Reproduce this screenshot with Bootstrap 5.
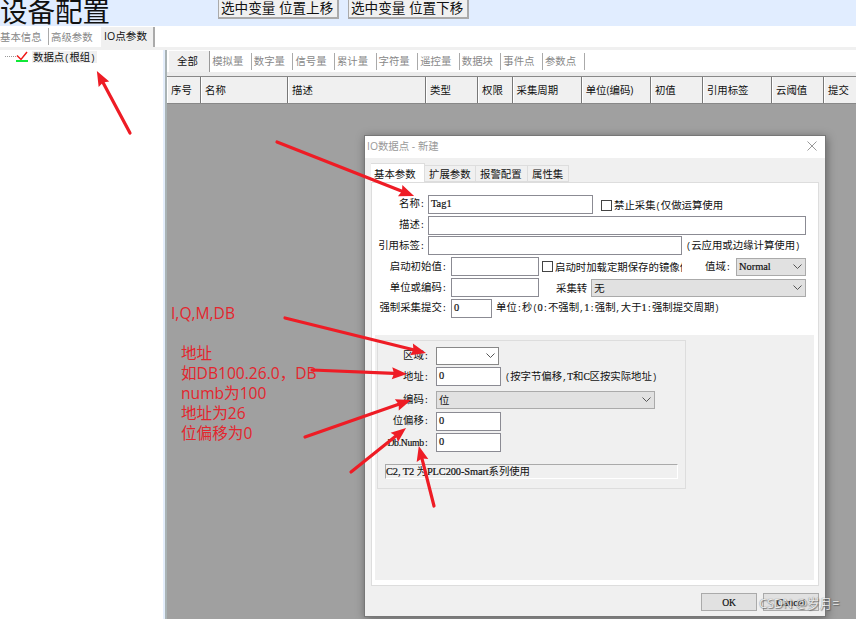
<!DOCTYPE html>
<html lang="zh-CN">
<head>
<meta charset="utf-8">
<title>设备配置</title>
<link href="https://cdn.jsdelivr.net/npm/bootstrap@5.3.0/dist/css/bootstrap.min.css" rel="stylesheet">
<style>
body{width:856px;height:619px;overflow:hidden;font:10.4px/14px "Open Sans","Noto Sans CJK SC",sans-serif;color:#111;background:#fff}
.shell{width:856px;height:619px}
.topbar{height:26px;background:#e1edff}
.topbar h1{font:27.5px/36px "Noto Sans CJK SC",sans-serif;margin:-8px 0 0;width:218px;color:#111}
.movebtn{width:121px;height:22px;margin-top:-3px;margin-right:9px;border:1px solid #aaa;border-bottom-width:2px;border-right-width:2px;background:#f0f0f0;font:13.6px/20px "Open Sans","Noto Sans CJK SC",sans-serif;padding:0 0 0 2px;white-space:nowrap;color:#111;text-align:left}
.maintabs{height:21px;color:#888}
.maintabs>div{height:17px;line-height:19px;white-space:nowrap}
.mt1{width:49px;border-right:1px solid #aaa}
.mt2{width:52px;padding-left:2px}
.mt3{width:54px;background:#f0f0f0;color:#111;border-right:2px solid #aaa;padding-left:3px;height:20px!important;font-size:10.6px}
.rule3{height:3px;background:#f0f0f0}
.tree{width:163px;flex:none;padding:1px 0 0 5px}
.tree .node{background:#f0f0f0;height:12px;line-height:12px;padding:0 2px 0 1px;margin-left:2px}
.split{width:4px;background:#e4eefc;border-right:2px solid #a9b3b5}
.subtabs{height:22px;color:#888;padding:1px 0 0 2px}
.subtabs>div{flex:none;width:41.6px;height:17px;line-height:17px;margin-top:2px;border-right:1px solid #aaa;padding-left:2px;white-space:nowrap}
.subtabs>div:first-child{width:41.2px;height:21px;margin-top:0;line-height:20px;background:#f0f0f0;color:#111;padding-left:8px;border-right:1.5px solid #999}
.gap5{height:4px;background:#ececec}
.gridhead{height:28px;background:#f0f0f0;border-top:1.5px solid #888;border-bottom:1px solid #888}
.gridhead>div{border-right:1px solid #777;border-left:1px solid #fff;padding-left:3px;line-height:27px;white-space:nowrap;flex:none}
.g1{width:34px}.g2{width:87px}.g3{width:138px}.g4{width:52px}.g5{width:34.5px}.g6{width:69.2px}.g8{width:52px}.g10{width:52px}
.canvas{background:#a0a0a0}
.dlg{position:absolute;left:364px;top:135px;width:462px;height:482px;background:#f0f0f0;border:1px solid #777;box-shadow:1px 2px 9px rgba(0,0,0,.38)}
.dlg-title{height:22px;background:#fff;color:#999;padding:0 8px 2px 2px}
.dlgtabs{height:24px;padding:6px 0 0 6px}
.dlgtabs>div{height:17px;line-height:17px;border:1px solid #ddd;border-left:0;padding-left:4px;margin-top:1px;white-space:nowrap}
.dlgtabs>div:first-child{width:54px;height:19px;line-height:20px;margin:-1px 0 0;background:#fff;border-bottom:0;padding-left:3px}
.dt2{width:51px}.dt3{width:52px}.dt4{width:41px}
.pane{margin-left:6px;width:448px;height:404px;background:#fff;border:1px solid #ddd;padding:11px 0 0 0}
.line{display:flex;align-items:center;height:20.8px;white-space:nowrap}
.lab{text-align:right;flex:none}
.l1{width:53px;margin-right:3px}.l2{width:75px;margin-right:4px}.l3{width:51px;margin-right:7px}.l4{width:49px;margin-right:5px}
.hw{font-family:"Liberation Mono","DejaVu Sans Mono",monospace;font-size:8.67px}
.hs{font-family:"Liberation Serif",serif;font-size:10.4px;-webkit-text-stroke:.2px #111}
.tight{letter-spacing:-.25px;font-size:9.6px}
.notetext{letter-spacing:-.1px}
.fld{flex:none;height:19px;border:1px solid #8b8b93;background:#fff;padding:0 0 0 2px;line-height:15px}
.sel{flex:none;height:18px;border:1px solid #aaa;background:#e1e1e1;padding:0 3px 0 2px;display:flex;align-items:center;justify-content:space-between}
.sel.lite{background:#fff;border-color:#888}
.box{flex:none;width:11px;height:11px;border:1px solid #444;background:#fff}
.box-a{margin:2px 2px 0 8px}.box-b{margin:0 2px 0 3px}
.conv{margin:0 4px 0 17px}
.w165{width:165px}.w378{width:378px}.w254{width:254px}.w88{width:88px}.w41{width:41px}.w70{width:70px}.w215{width:215px}.w63{width:63px}.w65{width:65px}.w219{width:219px}
.subpane{margin:16px 0 0 3px;width:439px;height:245px;background:#f0f0f0;padding:5px 0 0 2px}
.grp{width:309px;height:149px;border:1px solid #ddd;padding-top:5px}
.grp .line{height:21.4px}
.grp .line:first-child{height:20.4px}
.grp .line:nth-child(3){height:23px;padding-top:1px}
.note{width:293px;height:15px;margin:11px 0 0 7px;border:1px solid #aaa;border-right-color:#fff;border-bottom-color:#fff;line-height:12px;white-space:nowrap}
.foot{gap:6px;margin-top:7px;padding-right:6px}
.okbtn{width:56px;height:18px;border:1px solid #aaa;background:#e1e1e1;padding:0;line-height:14px;border-radius:0;color:#111;text-align:center}
.clip{overflow:hidden;width:127px}
.ink{color:#e3262e;font:15.6px/20px "Open Sans","Noto Sans CJK SC",sans-serif;position:absolute;white-space:nowrap}
.ink-a{left:171px;top:303px}
.ink-b{left:181px;top:343px}
.arrows{position:absolute;left:0;top:0;pointer-events:none}
.wm{position:absolute;left:759px;top:595px;font:12.6px/17px "Open Sans","Noto Sans CJK SC",sans-serif;color:#eee;text-shadow:0 0 1px #444,1px 1px 1px #666;opacity:.8;white-space:nowrap}
</style>
<script src="https://cdn.jsdelivr.net/npm/bootstrap@5.3.0/dist/js/bootstrap.bundle.min.js"></script>
</head>
<body>
<div class="shell d-flex flex-column position-relative overflow-hidden">
  <header class="topbar d-flex overflow-hidden flex-shrink-0">
    <h1>设备配置</h1>
    <button class="movebtn">选中变量 位置上移</button>
    <button class="movebtn">选中变量 位置下移</button>
  </header>
  <nav class="maintabs d-flex align-items-center flex-shrink-0">
    <div class="mt1">基本信息</div><div class="mt2">高级参数</div><div class="mt3">IO点参数</div>
  </nav>
  <div class="rule3 flex-shrink-0"></div>
  <div class="d-flex flex-grow-1">
    <aside class="tree d-flex align-items-start">
      <svg width="25" height="13" viewBox="0 0 25 13" class="flex-shrink-0"><path d="M0 5.500h11" stroke="#999" stroke-dasharray="1 1" fill="none"/><path d="M12 4.500l4 4L22 1" stroke="#f01818" stroke-width="1.500" fill="none"/><path d="M11 10h12" stroke="#11e838" stroke-width="2"/></svg>
      <div class="node">数据点<span class="hw">(</span>根组<span class="hw">)</span></div>
    </aside>
    <div class="split flex-shrink-0"></div>
    <main class="d-flex flex-column flex-grow-1 overflow-hidden">
      <nav class="subtabs d-flex flex-shrink-0"><div>全部</div><div>模拟量</div><div>数字量</div><div>信号量</div><div>累计量</div><div>字符量</div><div>遥控量</div><div>数据块</div><div>事件点</div><div>参数点</div></nav>
      <div class="gap5 flex-shrink-0"></div>
      <div class="gridhead d-flex flex-shrink-0"><div class="g1">序号</div><div class="g2">名称</div><div class="g3">描述</div><div class="g4">类型</div><div class="g5">权限</div><div class="g6">采集周期</div><div class="g6">单位(编码)</div><div class="g8">初值</div><div class="g6">引用标签</div><div class="g10">云阈值</div><div class="g10">提交</div></div>
      <div class="canvas flex-grow-1"></div>
    </main>
  </div>

  <section class="dlg">
    <div class="dlg-title d-flex align-items-center justify-content-between"><span>IO数据点 - 新建</span><svg width="10" height="10"><path d="M.5.5l9 9M9.500.5l-9 9" stroke="#999" fill="none"/></svg></div>
    <div class="dlgtabs d-flex"><div>基本参数</div><div class="dt2">扩展参数</div><div class="dt3">报警配置</div><div class="dt4">属性集</div></div>
    <div class="pane">
      <div class="line"><span class="lab l1">名称<span class="hw">:</span></span><div class="fld w165"><span class="hs">Tag1</span></div><i class="box box-a"></i><span class="pt-1">禁止采集<span class="hw">(</span>仅做运算使用</span></div>
      <div class="line"><span class="lab l1">描述<span class="hw">:</span></span><div class="fld w378"></div></div>
      <div class="line"><span class="lab l1">引用标签<span class="hw">:</span></span><div class="fld w254"></div><span class="ms-1"><span class="hw">(</span>云应用或边缘计算使用<span class="hw">)</span></span></div>
      <div class="line"><span class="lab l2">启动初始值<span class="hw">:</span></span><div class="fld w88"></div><i class="box box-b"></i><span class="clip">启动时加载定期保存的镜像值</span><span class="lab l4">值域<span class="hw">:</span></span><div class="sel w70"><span class="hs">Normal</span><svg width="9" height="6"><path d="M.5.5l4 4 4-4" stroke="#555" fill="none"/></svg></div></div>
      <div class="line"><span class="lab l2">单位或编码<span class="hw">:</span></span><div class="fld w88"></div><span class="conv">采集转</span><div class="sel w215"><span>无</span><svg width="9" height="6"><path d="M.5.5l4 4 4-4" stroke="#555" fill="none"/></svg></div></div>
      <div class="line"><span class="lab l2">强制采集提交<span class="hw">:</span></span><div class="fld w41"><span class="hs">0</span></div><span class="ms-1">单位<span class="hw">:</span>秒<span class="hw">(</span><span class="hs">0</span><span class="hw">:</span>不强制<span class="hw">,</span><span class="hs">1</span><span class="hw">:</span>强制<span class="hw">,</span>大于<span class="hs">1</span><span class="hw">:</span>强制提交周期<span class="hw">)</span></span></div>
      <div class="subpane"><div class="grp">
        <div class="line"><span class="lab l3">区域<span class="hw">:</span></span><div class="sel lite w63"><span></span><svg width="9" height="6"><path d="M.5.5l4 4 4-4" stroke="#555" fill="none"/></svg></div></div>
        <div class="line"><span class="lab l3">地址<span class="hw">:</span></span><div class="fld w65"><span class="hs">0</span></div><span class="ms-1"><span class="hw">(</span>按字节偏移<span class="hw">,</span><span class="hs tight">T</span>和<span class="hs tight">C</span>区按实际地址<span class="hw">)</span></span></div>
        <div class="line"><span class="lab l3">编码<span class="hw">:</span></span><div class="sel w219"><span>位</span><svg width="9" height="6"><path d="M.5.5l4 4 4-4" stroke="#555" fill="none"/></svg></div></div>
        <div class="line"><span class="lab l3">位偏移<span class="hw">:</span></span><div class="fld w65"><span class="hs">0</span></div></div>
        <div class="line"><span class="lab l3"><span class="hs tight">Db.Numb</span><span class="hw">:</span></span><div class="fld w65"><span class="hs">0</span></div></div>
        <div class="note notetext"><span class="hs">C2, T2 </span>为<span class="hs">PLC200-Smart</span>系列使用</div>
      </div></div>
    </div>
    <div class="foot d-flex justify-content-end"><button class="okbtn"><span class="hs tight">OK</span></button><button class="okbtn"><span class="hs">Cancel</span></button></div>
  </section>

  <div class="ink ink-a">I,Q,M,DB</div>
  <div class="ink ink-b">地址<br>如DB100.26.0，DB<br>numb为100<br>地址为26<br>位偏移为0</div>
  <svg class="arrows" width="856" height="619" fill="none" stroke="#ee1c25" stroke-width="3.200" stroke-linecap="round">
    <defs><marker id="tip" markerUnits="userSpaceOnUse" markerWidth="18" markerHeight="14" refX="3" refY="7" orient="auto"><path d="M1 1L16 7 1 13 3 7z" fill="#ee1c25" stroke="none"/></marker></defs>
    <g marker-end="url(#tip)"><path d="M130 133L103 82.500"/><path d="M277 142L402 191.300"/><path d="M285 318L413.400 349.800"/><path d="M312 370L394 373.400"/><path d="M305 437L398.700 404.300"/><path d="M351 472L395.900 436.100"/><path d="M434 506L422 458.600"/></g>
  </svg>
  <div class="wm">CSDN @岁月=</div>
</div>
</body>
</html>
